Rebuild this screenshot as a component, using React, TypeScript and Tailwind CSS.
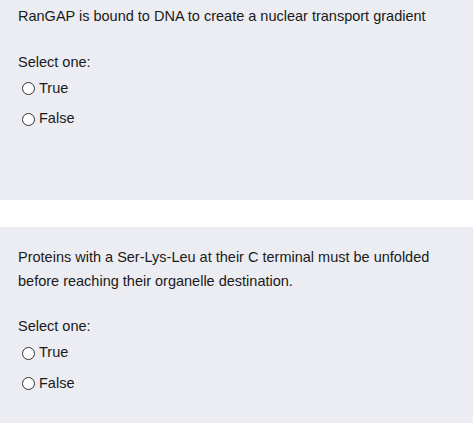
const questions = [
  {
    id: "q1",
    text: "RanGAP is bound to DNA to create a nuclear transport gradient",
    top: "pt-[5px]",
  },
  {
    id: "q2",
    text: "Proteins with a Ser-Lys-Leu at their C terminal must be unfolded before reaching their organelle destination.",
    top: "pt-[19px]",
  },
]

const Question = ({ id, text, top }: { id: string; text: string; top: string }) => {
  return (
    <div className={`bg-[#ecedf2] px-[18px] pb-[65.5px] ${top}`}>
      <p className="leading-[23.5px]">{text}</p>
      <div className="mt-[23px] leading-[20px]">Select one:</div>
      <div className="mt-[2px] flex flex-col">
        {["True", "False"].map((opt) => (
          <label key={opt} className="flex h-[30.5px] items-center gap-[4px] pl-[4px]">
            <input
              type="radio"
              name={id}
              className="m-0 h-[13px] w-[13px] appearance-none rounded-full border border-[#333] bg-white"
            />
            <span>{opt}</span>
          </label>
        ))}
      </div>
    </div>
  )
}

export default function App() {
  return (
    <div className="h-[423px] w-[473px] overflow-hidden bg-white font-['Liberation_Sans',Arial,sans-serif] text-[14.5px] text-[#1a1a1a]">
      <Question {...questions[0]} />
      <div className="h-[27px] bg-white" />
      <Question {...questions[1]} />
    </div>
  )
}
